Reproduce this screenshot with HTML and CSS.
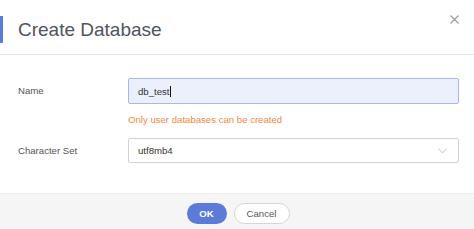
FILE: index.html
```html
<!DOCTYPE html>
<html>
<head>
<meta charset="utf-8">
<link rel="stylesheet" href="styles.css">
</head>
<body>
<div class="dialog">
  <div class="header">
    <div class="title">Create Database</div>
    <svg class="close" width="9" height="9" viewBox="0 0 9 9"><path d="M0.5 0.5L8.5 8.5M8.5 0.5L0.5 8.5" stroke="#9a9a9a" stroke-width="1.1" fill="none"/></svg>
  </div>
  <div class="form">
    <div class="row">
      <div class="label">Name</div>
      <div class="field">
        <div class="input focus"><span>db_test</span><span class="caret"></span></div>
        <div class="error">Only user databases can be created</div>
      </div>
    </div>
    <div class="row row2">
      <div class="label">Character Set</div>
      <div class="field">
        <div class="input select"><span>utf8mb4</span>
          <svg class="chev" width="9" height="6" viewBox="0 0 9 6"><path d="M0.5 0.5L4.5 5L8.5 0.5" stroke="#c4c4c4" stroke-width="1" fill="none"/></svg>
        </div>
      </div>
    </div>
  </div>
  <div class="footer">
    <div class="btn ok">OK</div>
    <div class="btn cancel">Cancel</div>
  </div>
</div>
</body>
</html>
```
FILE: styles.css
```css
html, body {
  margin: 0;
  padding: 0;
  background: #fff;
}
body {
  font-family: "Liberation Sans", Arial, sans-serif;
  width: 474px;
  height: 229px;
  overflow: hidden;
}
.dialog {
  width: 474px;
  height: 229px;
  display: flex;
  flex-direction: column;
}
.header {
  height: 54px;
  border-bottom: 1px solid #e8e8ea;
  display: flex;
  justify-content: space-between;
  align-items: flex-start;
  box-sizing: content-box;
}
.title {
  margin-top: 16px;
  border-left: 3px solid #5b7bd8;
  padding-left: 15px;
  height: 27px;
  line-height: 28px;
  font-size: 19px;
  color: #4f5461;
}
.close {
  margin-top: 15px;
  margin-right: 15px;
}
.form {
  padding: 23px 15px 0 18px;
}
.row {
  display: grid;
  grid-template-columns: 110px 1fr;
}
.row2 {
  margin-top: 12px;
}
.label {
  font-size: 9.6px;
  color: #555;
  line-height: 26px;
  height: 26px;
}
.row2 .label {
  line-height: 25px;
}
.input {
  height: 26px;
  box-sizing: border-box;
  border: 1px solid #d2d2d2;
  border-radius: 2px;
  padding-left: 9px;
  font-size: 9.6px;
  color: #333;
  display: flex;
  align-items: center;
}
.input.focus {
  background: #ecf0fc;
  border-color: #a9b7ee;
}
.caret {
  display: inline-block;
  width: 1px;
  height: 11px;
  background: #111;
  margin-left: 0.5px;
}
.error {
  margin-top: 10px;
  font-size: 9.6px;
  line-height: 12px;
  color: #f5883f;
}
.select {
  height: 25px;
  justify-content: space-between;
  padding-right: 11px;
}
.chev {
  margin-top: 1px;
}
.footer {
  margin-top: 29px;
  flex: 1;
  background: #f5f5f6;
  border-top: 1px solid #efeff0;
  display: flex;
  justify-content: center;
  align-items: flex-start;
  gap: 7px;
  padding-top: 9px;
  padding-left: 2px;
}
.btn {
  height: 21px;
  box-sizing: border-box;
  border-radius: 11px;
  font-size: 9.6px;
  line-height: 21px;
  text-align: center;
}
.ok {
  width: 40px;
  background: #5c7bd9;
  color: #fff;
  font-weight: bold;
}
.cancel {
  width: 56px;
  background: #fff;
  border: 1px solid #d6d6d6;
  line-height: 19px;
  color: #555;
}
```
